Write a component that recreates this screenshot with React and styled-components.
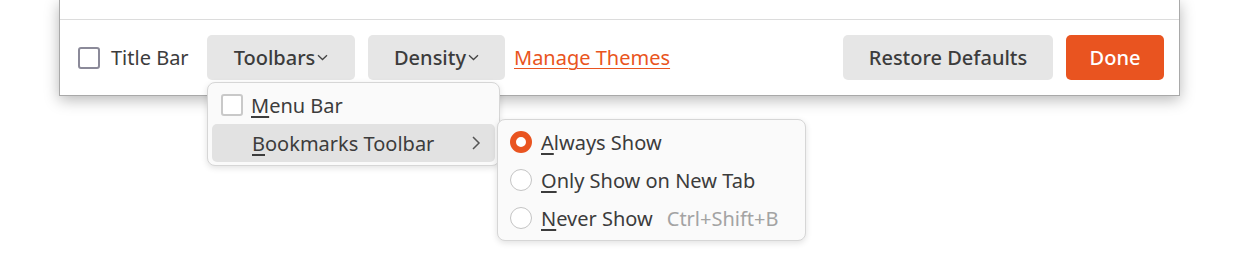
import React from "react";
import styled, { createGlobalStyle } from "styled-components";

const Global = createGlobalStyle`
  html, body {
    margin: 0;
    padding: 0;
    background: #ffffff;
    font-family: "Noto Sans", "Open Sans", sans-serif;
    color: #3c3c3c;
  }
`;

const Stage = styled.div`
  height: 277px;
  overflow: hidden;
  padding: 0 60px 0 59px;
`;

const Window = styled.div`
  background: #fff;
  border: 1px solid #a9a9a9;
  border-top: none;
  box-shadow: 0 4px 14px rgba(0, 0, 0, 0.28);
`;

const Body = styled.div`
  height: 19px;
  border-bottom: 1px solid #dcdcdc;
`;

const Footer = styled.div`
  height: 75px;
  display: flex;
  align-items: center;
  padding: 0 15px 0 18px;
`;

const Box = styled.span`
  box-sizing: border-box;
  width: 22px;
  height: 22px;
  border: 2px solid ${(p) => p.$border || "#8b8a99"};
  border-radius: 3px;
  background: #fff;
  flex: none;
`;

const Label = styled.label`
  display: flex;
  align-items: center;
  gap: 11px;
  font-size: 20px;
  width: 129px;
`;

const Anchor = styled.div`
  position: relative;
  margin-right: ${(p) => p.$gap || 0}px;
`;

const Button = styled.button`
  width: ${(p) => p.$w}px;
  height: 45px;
  padding: 0;
  border: none;
  border-radius: 5px;
  background: ${(p) => (p.$primary ? "#e95420" : "#e6e6e6")};
  color: ${(p) => (p.$primary ? "#ffffff" : "#3c3c3c")};
  font-family: inherit;
  font-size: 20px;
  font-weight: 500;
  display: flex;
  align-items: center;
  justify-content: center;
  gap: 2px;
`;

const Link = styled.a`
  color: #e95420;
  font-size: 20px;
  text-decoration: underline;
  text-underline-offset: 3px;
  text-decoration-thickness: 1px;
`;

const Spacer = styled.div`
  flex: 1;
`;

const Menu = styled.div`
  position: absolute;
  z-index: 5;
  top: ${(p) => p.$top}px;
  left: ${(p) => p.$left};
  width: ${(p) => p.$width}px;
  box-sizing: border-box;
  padding: 3px 4px;
  background: #fafafa;
  border: 1px solid #d6d6d6;
  border-radius: 8px;
  box-shadow: 0 2px 6px rgba(0, 0, 0, 0.12);
`;

const Item = styled.div`
  position: relative;
  height: ${(p) => p.$h || 38}px;
  display: flex;
  align-items: center;
  gap: ${(p) => p.$gapx || 8}px;
  padding: 0 14px 0 ${(p) => p.$left || 9}px;
  border-radius: 5px;
  background: ${(p) => (p.$active ? "#e2e2e2" : "transparent")};
  font-size: 20px;
  color: #3c3c3c;
  white-space: nowrap;
`;

const Indent = styled.span`
  width: 23px;
  flex: none;
`;

const Radio = styled.span`
  box-sizing: border-box;
  width: 22px;
  height: 22px;
  border-radius: 50%;
  flex: none;
  border: ${(p) => (p.$on ? "6px solid #e95420" : "1.5px solid #c4c4c4")};
  background: #fff;
`;

const Key = styled.span`
  text-decoration: underline;
  text-underline-offset: 3px;
`;

const Shortcut = styled.span`
  color: #a3a3a3;
  margin-left: 5px;
`;

const Chevron = styled.span`
  margin-left: auto;
  display: flex;
  color: #555;
`;

const Caret = () => (
  <svg width="11" height="7" viewBox="0 0 11 7">
    <path d="M1 1.2 L5.5 5.5 L10 1.2" fill="none" stroke="#444" strokeWidth="1.3" />
  </svg>
);

const Mn = ({ k, rest }) => (
  <span>
    <Key>{k}</Key>
    {rest}
  </span>
);

export default function App() {
  return (
    <Stage>
      <Global />
      <Window>
        <Body />
        <Footer>
          <Label>
            <Box />
            Title Bar
          </Label>
          <Anchor $gap={13}>
            <Button $w={148}>
              Toolbars
              <Caret />
            </Button>
            <Menu $top={47} $left="0" $width={293}>
              <Item>
                <Box $border="#c9c9c9" />
                <Mn k="M" rest="enu Bar" />
              </Item>
              <Item $active>
                <Indent />
                <Mn k="B" rest="ookmarks Toolbar" />
                <Chevron>
                  <svg width="10" height="16" viewBox="0 0 10 16">
                    <path d="M2 2 L8 8 L2 14" fill="none" stroke="#555" strokeWidth="1.5" />
                  </svg>
                </Chevron>
                <Menu $top={-5} $left="calc(100% + 2px)" $width={309}>
                  <Item $left={8} $gapx={9}>
                    <Radio $on />
                    <Mn k="A" rest="lways Show" />
                  </Item>
                  <Item $left={8} $gapx={9}>
                    <Radio />
                    <Mn k="O" rest="nly Show on New Tab" />
                  </Item>
                  <Item $left={8} $gapx={9}>
                    <Radio />
                    <Mn k="N" rest="ever Show" />
                    <Shortcut>Ctrl+Shift+B</Shortcut>
                  </Item>
                </Menu>
              </Item>
            </Menu>
          </Anchor>
          <Anchor $gap={9}>
            <Button $w={137}>
              Density
              <Caret />
            </Button>
          </Anchor>
          <Link>Manage Themes</Link>
          <Spacer />
          <Anchor $gap={13}>
            <Button $w={210}>Restore Defaults</Button>
          </Anchor>
          <Button $primary $w={98}>Done</Button>
        </Footer>
      </Window>
    </Stage>
  );
}
